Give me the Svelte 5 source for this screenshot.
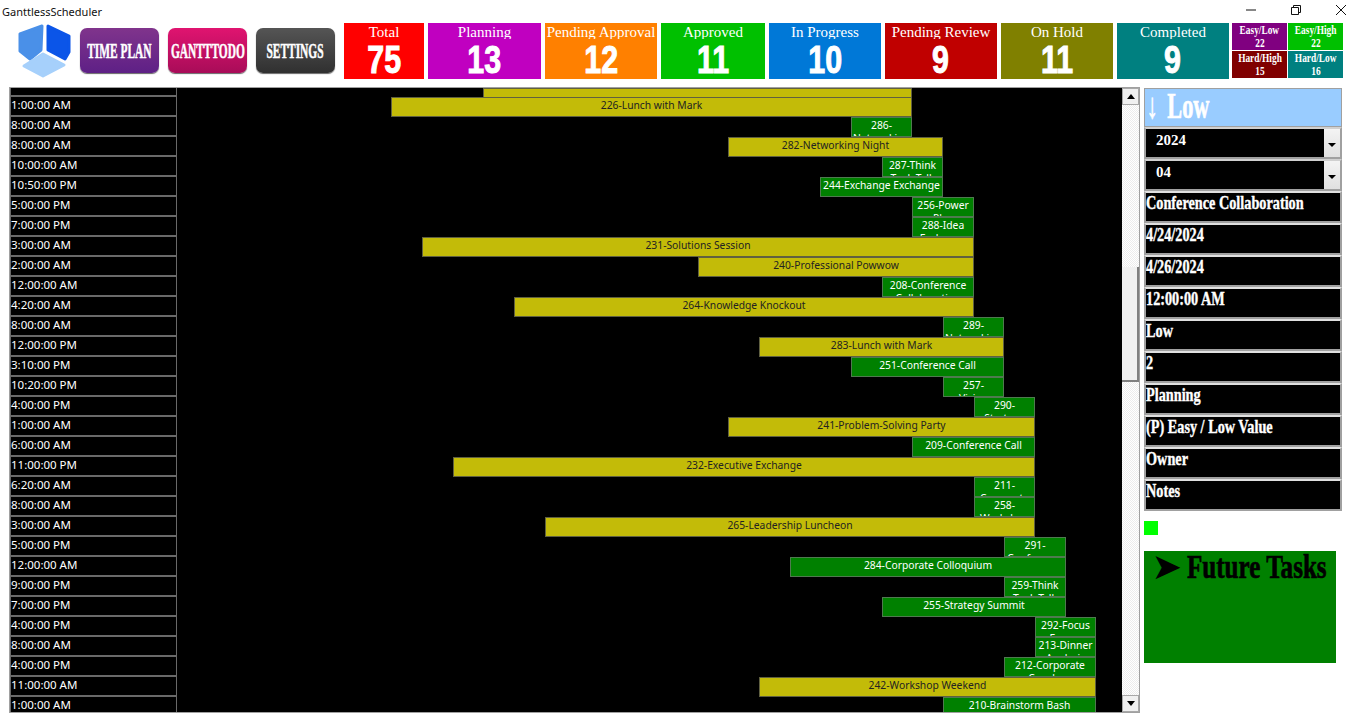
<script>
    const stats = [
        { label: 'Total', value: 75, color: '#ff0000', width: 80 },
        { label: 'Planning', value: 13, color: '#c000c0', width: 113 },
        { label: 'Pending Approval', value: 12, color: '#ff8000', width: 112 },
        { label: 'Approved', value: 11, color: '#00c000', width: 104 },
        { label: 'In Progress', value: 10, color: '#0078d7', width: 112 },
        { label: 'Pending Review', value: 9, color: '#c00000', width: 112 },
        { label: 'On Hold', value: 11, color: '#808000', width: 112 },
        { label: 'Completed', value: 9, color: '#008080', width: 112 }
    ];

    const matrix = [
        { label: 'Easy/Low', value: 22, color: '#800080' },
        { label: 'Easy/High', value: 22, color: '#00c000' },
        { label: 'Hard/High', value: 15, color: '#800000' },
        { label: 'Hard/Low', value: 16, color: '#008080' }
    ];

    // time, first line of task, second line (clipped), start x, end x, yellow?
    const rows = [
        ['1:00:00 AM', '226-Lunch with Mark', '', 391, 912, true],
        ['8:00:00 AM', '286-', 'Networking', 851, 912],
        ['8:00:00 AM', '282-Networking Night', '', 728, 943, true],
        ['10:00:00 AM', '287-Think', 'Tank Talk', 882, 943],
        ['10:50:00 PM', '244-Exchange Exchange', '', 820, 943],
        ['5:00:00 PM', '256-Power', 'Play', 912, 974],
        ['7:00:00 PM', '288-Idea', 'Exchange', 912, 974],
        ['3:00:00 AM', '231-Solutions Session', '', 422, 974, true],
        ['2:00:00 AM', '240-Professional Powwow', '', 698, 974, true],
        ['12:00:00 AM', '208-Conference', 'Collaboration', 882, 974],
        ['4:20:00 AM', '264-Knowledge Knockout', '', 514, 974, true],
        ['8:00:00 AM', '289-', 'Networking', 943, 1004],
        ['12:00:00 PM', '283-Lunch with Mark', '', 759, 1004, true],
        ['3:10:00 PM', '251-Conference Call', '', 851, 1004],
        ['10:20:00 PM', '257-', 'Vision', 943, 1004],
        ['4:00:00 PM', '290-', 'Strategy', 974, 1035],
        ['1:00:00 AM', '241-Problem-Solving Party', '', 728, 1035, true],
        ['6:00:00 AM', '209-Conference Call', '', 912, 1035],
        ['11:00:00 PM', '232-Executive Exchange', '', 453, 1035, true],
        ['6:20:00 AM', '211-', 'Corporate', 974, 1035],
        ['8:00:00 AM', '258-', 'Workshop', 974, 1035],
        ['3:00:00 AM', '265-Leadership Luncheon', '', 545, 1035, true],
        ['5:00:00 PM', '291-', 'Conference', 1004, 1066],
        ['12:00:00 AM', '284-Corporate Colloquium', '', 790, 1066],
        ['9:00:00 PM', '259-Think', 'Tank Talk', 1004, 1066],
        ['7:00:00 PM', '255-Strategy Summit', '', 882, 1066],
        ['4:00:00 PM', '292-Focus', 'Forum', 1035, 1096],
        ['8:00:00 AM', '213-Dinner', 'Analysis', 1035, 1096],
        ['4:00:00 PM', '212-Corporate', 'Conclave', 1004, 1096],
        ['11:00:00 AM', '242-Workshop Weekend', '', 759, 1096, true],
        ['1:00:00 AM', '210-Brainstorm Bash', '', 943, 1096]
    ];

    const fields = [
        'Conference Collaboration', '4/24/2024', '4/26/2024', '12:00:00 AM',
        'Low', '2', 'Planning', '(P) Easy / Low Value', 'Owner', 'Notes'
    ];

    const chartLeft = 177;
</script>

<div class="window">
    <div class="titlebar">
        <span class="title">GanttlessScheduler</span>
        <div class="win-controls">
            <svg width="12" height="12" viewBox="0 0 12 12"><path d="M1 6h10" stroke="#111" fill="none" /></svg>
            <svg width="12" height="12" viewBox="0 0 12 12"><path d="M1.5 3.5h7v7h-7zM3.5 3.5v-2h7v7h-2" stroke="#111" fill="none" /></svg>
            <svg width="12" height="12" viewBox="0 0 12 12"><path d="M1 1l10 10M11 1L1 11" stroke="#111" fill="none" /></svg>
        </div>
    </div>

    <div class="toolbar">
        <svg class="logo" width="56" height="58" viewBox="0 0 56 58" stroke-linejoin="round" stroke-width="3">
            <path d="M25 3L3 11V28L13 36L24 27Z" fill="#4a90e8" stroke="#4a90e8" />
            <path d="M31 3L52 13V29L48 36L31 27Z" fill="#0b55e8" stroke="#0b55e8" />
            <path d="M26 31L47 42L26 53L7 43Z" fill="#a6d0fb" stroke="#a6d0fb" />
        </svg>
        <button class="nav purple"><span>TIME PLAN</span></button>
        <button class="nav pink"><span>GANTTTODO</span></button>
        <button class="nav gray"><span>SETTINGS</span></button>

        <div class="stats">
            {#each stats as s}
                <div class="stat" style="background:{s.color};width:{s.width}px">
                    <div class="stat-label">{s.label}</div>
                    <div class="stat-value"><span>{s.value}</span></div>
                </div>
            {/each}
        </div>

        <div class="matrix">
            {#each matrix as m}
                <div class="cell" style="background:{m.color}">
                    <span>{m.label}</span>
                    <span>{m.value}</span>
                </div>
            {/each}
        </div>
    </div>

    <div class="content">
        <div class="gantt">
            <div class="gantt-body">
                <div class="row top">
                    <div class="time"></div>
                    <div class="track">
                        <div class="bar yellow" style="margin-left:{483 - chartLeft}px;width:{912 - 483}px"></div>
                    </div>
                </div>
                {#each rows as [time, line1, line2, start, end, yellow]}
                    <div class="row">
                        <div class="time">{time}</div>
                        <div class="track">
                            <div class="bar" class:yellow style="margin-left:{start - chartLeft}px;width:{end - start}px">
                                <span>{line1}</span>
                                {#if line2}<span>{line2}</span>{/if}
                            </div>
                        </div>
                    </div>
                {/each}
            </div>
            <div class="scrollbar">
                <div class="arrow"><svg width="8" height="5" viewBox="0 0 8 5"><path d="M4 0l4 5H0z" /></svg></div>
                <div class="sb-track"><div class="thumb"></div></div>
                <div class="arrow"><svg width="8" height="5" viewBox="0 0 8 5"><path d="M0 0h8L4 5z" /></svg></div>
            </div>
        </div>

        <aside class="side">
            <div class="priority"><span>↓ Low</span></div>
            <div class="select"><span>2024</span><div class="drop"><svg width="8" height="4" viewBox="0 0 8 4"><path d="M0 0h8L4 4z" /></svg></div></div>
            <div class="select"><span>04</span><div class="drop"><svg width="8" height="4" viewBox="0 0 8 4"><path d="M0 0h8L4 4z" /></svg></div></div>
            {#each fields as f}
                <div class="field"><span>{f}</span></div>
            {/each}
            <div class="indicator"></div>
            <div class="future"><span class="future-arrow">➤</span><span class="future-text">Future Tasks</span></div>
        </aside>
    </div>
</div>

<style>
    :global(body) {
        background: #fff;
        overflow: hidden;
    }

    .window {
        width: 1366px;
        height: 726px;
        display: flex;
        flex-direction: column;
        font-family: "Noto Sans", sans-serif;
        overflow: hidden;
    }

    .titlebar {
        height: 23px;
        flex: none;
        display: flex;
        align-items: center;
        justify-content: space-between;
    }

    .title {
        font-size: 11px;
        padding-left: 2px;
        color: #111;
    }

    .win-controls {
        display: flex;
        gap: 33px;
        padding-right: 19px;
        margin-top: -3px;
    }

    .toolbar {
        height: 64px;
        flex: none;
        display: flex;
        align-items: flex-start;
    }

    .logo {
        margin-left: 17px;
        flex: none;
    }

    .nav {
        width: 79px;
        height: 45px;
        margin-top: 5px;
        margin-left: 9px;
        padding: 1px 0 0;
        border: none;
        border-radius: 7px;
        color: #fff;
        font: bold 20px "Liberation Serif", serif;
        flex: none;
        display: flex;
        align-items: center;
        justify-content: center;
        box-shadow: 0 1px 1px rgba(0, 0, 0, 0.6);
    }

    .nav span {
        flex: none;
        transform: scaleX(0.57);
        white-space: nowrap;
        -webkit-text-stroke: 0.5px #fff;
    }

    .nav.purple {
        background: linear-gradient(#80348c, #5e2086);
        margin-left: 7px;
    }

    .nav.pink {
        background: linear-gradient(#e01470, #a80c58);
    }

    .nav.gray {
        background: linear-gradient(#555, #303030);
    }

    .stats {
        display: flex;
        gap: 4px;
        margin-left: 9px;
    }

    .stat {
        height: 56px;
        color: #fff;
        text-align: center;
        overflow: hidden;
        flex: none;
    }

    .stat-label {
        font: 15px/15px "Liberation Serif", serif;
        height: 14px;
        overflow: hidden;
        margin-top: 2px;
        white-space: nowrap;
    }

    .stat-value {
        font: bold 38px/36px "Liberation Sans", sans-serif;
        margin-top: 3px;
    }

    .stat-value span {
        display: inline-block;
        transform: scaleX(0.8);
        -webkit-text-stroke: 1px #fff;
    }

    .matrix {
        display: grid;
        grid-template-columns: 55px 55px;
        grid-auto-rows: 27px;
        gap: 1px;
        margin-left: 3px;
    }

    .cell {
        color: #fff;
        display: flex;
        flex-direction: column;
        align-items: center;
        font: bold 12px/13px "Liberation Serif", serif;
        overflow: hidden;
        padding-top: 1px;
    }

    .cell span {
        display: inline-block;
        transform: scaleX(0.78);
        white-space: nowrap;
    }

    .content {
        flex: 1;
        display: flex;
        min-height: 0;
        align-items: flex-start;
    }

    .gantt {
        margin-left: 9px;
        width: 1131px;
        height: 626px;
        border: 1px solid #a0a0a0;
        box-sizing: border-box;
        background: #000;
        display: flex;
        flex: none;
    }

    .gantt-body {
        flex: 1;
        min-width: 0;
        overflow: hidden;
    }

    .row {
        display: flex;
        height: 20px;
    }

    .row.top {
        height: 9px;
    }

    .time {
        width: 167px;
        flex: none;
        box-sizing: border-box;
        border-bottom: 2px solid #696969;
        border-right: 1px solid #696969;
        border-left: 1px solid #696969;
        color: #fff;
        font: 11.5px/16px "Noto Sans", sans-serif;
        overflow: hidden;
        white-space: nowrap;
    }

    .track {
        flex: 1;
        min-width: 0;
    }

    .bar {
        height: 20px;
        box-sizing: border-box;
        border: 1px solid #4f7a4f;
        background: #008000;
        color: #fff;
        font-size: 10.3px;
        line-height: 13px;
        text-align: center;
        overflow: hidden;
        display: flex;
        flex-direction: column;
        padding-top: 1px;
    }

    .bar span {
        white-space: nowrap;
        flex: none;
        height: 13px;
    }

    .bar.yellow {
        background: #c3bb08;
        color: #222;
        border-color: #606040;
    }

    .scrollbar {
        width: 17px;
        flex: none;
        display: flex;
        flex-direction: column;
        background: #f0f0f0;
    }

    .arrow {
        height: 17px;
        flex: none;
        background: #f0f0f0;
        border: 1px solid #a8a8a8;
        box-sizing: border-box;
        display: flex;
        align-items: center;
        justify-content: center;
    }

    .sb-track {
        flex: 1;
        background: repeating-conic-gradient(#ececec 0 25%, #fff 0 50%) 0 0 / 2px 2px;
        padding-top: 162px;
    }

    .thumb {
        height: 115px;
        background: #f0f0f0;
        border-right: 2px solid #808080;
        border-bottom: 2px solid #808080;
        box-sizing: border-box;
    }

    .side {
        width: 198px;
        margin-left: 4px;
        margin-top: 1px;
        display: flex;
        flex-direction: column;
        flex: none;
    }

    .priority {
        height: 39px;
        background: #99ccff;
        border: 1px solid #a0a0a0;
        box-sizing: border-box;
        color: #fff;
        font: bold 36px/34px "Liberation Serif", serif;
        white-space: nowrap;
        overflow: hidden;
    }

    .priority span {
        display: inline-block;
        transform: scaleX(0.62);
        transform-origin: left center;
        padding-left: 3px;
        word-spacing: 6px;
        -webkit-text-stroke: 0.7px #fff;
    }

    .select {
        height: 32px;
        box-sizing: border-box;
        background: #000;
        border: 2px solid #a0a0a0;
        border-top-color: #d0d0d0;
        color: #fff;
        font: bold 15px/22px "Liberation Serif", serif;
        display: flex;
        justify-content: space-between;
        padding-left: 10px;
    }

    .drop {
        width: 16px;
        background: linear-gradient(#f4f4f4, #e0e0e0);
        display: flex;
        align-items: center;
        justify-content: center;
        padding-top: 4px;
        box-sizing: border-box;
    }

    .field {
        height: 32px;
        box-sizing: border-box;
        background: #000;
        border: 2px solid #a0a0a0;
        border-top-color: #e0e0e0;
        color: #fff;
        font: bold 19px/19px "Liberation Serif", serif;
        overflow: hidden;
        white-space: nowrap;
    }

    .field span {
        display: inline-block;
        transform: scaleX(0.75);
        transform-origin: left center;
        -webkit-text-stroke: 0.4px #fff;
    }

    .indicator {
        width: 14px;
        height: 14px;
        background: #00ff00;
        margin-top: 10px;
    }

    .future {
        width: 192px;
        height: 112px;
        margin-top: 16px;
        background: #008000;
        color: #000;
        font: bold 33px/32px "Liberation Serif", serif;
        white-space: nowrap;
        overflow: hidden;
        display: flex;
        align-items: flex-start;
        padding-left: 9px;
        box-sizing: border-box;
    }

    .future-arrow {
        flex: none;
        width: 34px;
    }

    .future-text {
        flex: none;
        transform: scaleX(0.76);
        transform-origin: left center;
        -webkit-text-stroke: 0.7px #000;
    }
</style>
